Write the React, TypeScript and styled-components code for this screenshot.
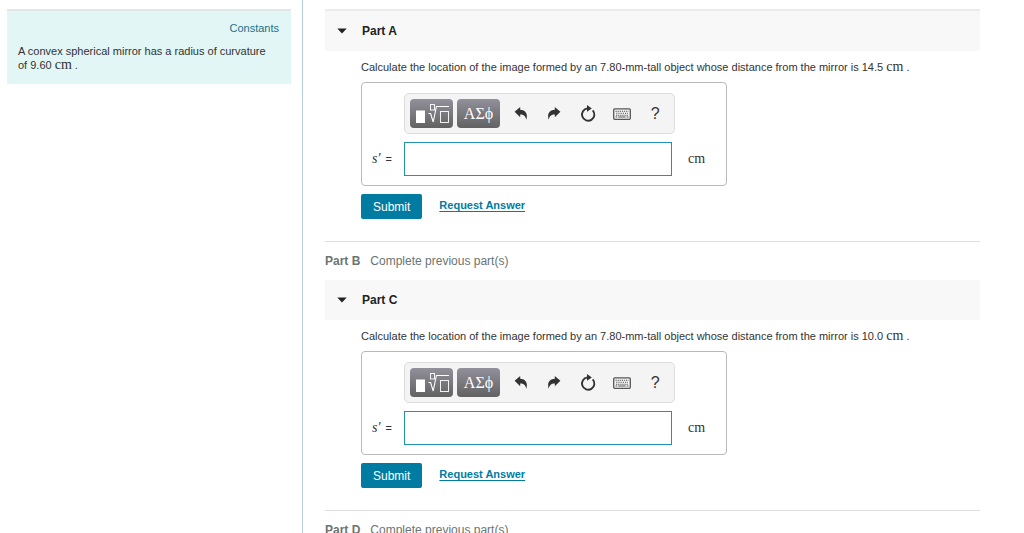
import React, { useId, useState } from "react";
import styled, { createGlobalStyle } from "styled-components";

const GlobalStyle = createGlobalStyle`
  *, *::before, *::after { box-sizing: border-box; }
  body {
    margin: 0;
    background: #fff;
    color: #333;
    font-family: "Liberation Sans", Arial, Helvetica, sans-serif;
    font-size: 11px;
    line-height: 14px;
  }
  button, input { font-family: inherit; }
`;

const Page = styled.div`
  display: flex;
  min-height: 100vh;
`;

const Sidebar = styled.aside`
  flex: 0 0 303px;
  padding: 9px 11px 0 7px;
  border-right: 1px solid #b8cfe0;
`;

const Intro = styled.section`
  padding: 10px 12px 12px 11px;
  border-top: 2px solid #e0e8e7;
  background: #e2f6f6;
`;

const ConstantsLink = styled.a`
  display: block;
  width: fit-content;
  margin: 0 0 9px auto;
  color: #1c7189;
  font-size: 11px;
  text-decoration: none;
`;

const Paragraph = styled.p`
  margin: 0;
  padding-right: 4px;
`;

const Unit = styled.span`
  font-family: "Liberation Serif", "Times New Roman", serif;
  font-size: 14px;
  line-height: 14px;
`;

const Main = styled.main`
  flex: 1;
  min-width: 0;
  padding: 9px 44px 0 22px;
`;

const Part = styled.section`
  border-bottom: 1px solid #dedede;
`;

const PartHeader = styled.h2<{ $first?: boolean }>`
  margin: 0;
  border-top: ${(p) => (p.$first ? "2px solid #ebebeb" : "0")};
  background: #f8f8f8;
`;

const PartToggle = styled.button`
  display: flex;
  align-items: center;
  gap: 15px;
  width: 100%;
  height: 40px;
  padding: 0 12px;
  border: 0;
  background: none;
  color: #222;
  font-size: 12px;
  font-weight: bold;
`;

const PartBody = styled.div`
  padding: 9px 0 22px 36px;
`;

const Answer = styled.div`
  width: fit-content;
  margin-top: 8px;
  padding: 10px 21px 9px 10px;
  border: 1px solid #b9b9b9;
  border-radius: 4px;
`;

const Toolbar = styled.div`
  display: flex;
  align-items: center;
  gap: 4px;
  width: 271px;
  height: 41px;
  margin: 0 0 8px 32px;
  padding: 0 2px 0 5px;
  border: 1px solid #dcdcdc;
  border-radius: 5px;
  background: #f4f4f4;
`;

const PaletteButton = styled.button`
  display: flex;
  align-items: center;
  justify-content: center;
  width: 43px;
  height: 29px;
  padding: 0;
  border: 0;
  border-radius: 4px;
  background: linear-gradient(#92909b, #626262);
  color: #fff;
  font-family: "Liberation Serif", "Times New Roman", serif;
  font-size: 16px;
`;

const IconGroup = styled.div`
  display: flex;
  flex: 1;
`;

const IconButton = styled.button`
  display: flex;
  flex: 1;
  align-items: center;
  justify-content: center;
  height: 28px;
  padding: 0;
  border: 0;
  background: none;
  color: #333;
  font-size: 16px;
`;

const Field = styled.div`
  display: flex;
  align-items: center;
`;

const FieldLabel = styled.label`
  display: flex;
  align-items: center;
  gap: 5px;
  width: 32px;
`;

const Variable = styled.i`
  font-family: "Liberation Serif", "Times New Roman", serif;
  font-size: 14px;
`;

const AnswerInput = styled.input`
  width: 268px;
  height: 34px;
  margin-right: 16px;
  padding: 0 8px;
  border: 1px solid #2291b3;
  border-radius: 0;
  background: #fff;
  font-size: 12px;
  outline: 0;
`;

const Actions = styled.div`
  display: flex;
  align-items: flex-start;
  gap: 17px;
  margin-top: 8px;
`;

const SubmitButton = styled.button`
  height: 25px;
  padding: 0 12px;
  border: 0;
  border-radius: 2px;
  background: #007ca3;
  color: #fff;
  font-size: 12px;
`;

const RequestLink = styled.a`
  padding-top: 4px;
  color: #007ca3;
  font-weight: bold;
  text-decoration: underline;
  text-underline-offset: 2px;
`;

const LockedPart = styled.p`
  display: flex;
  gap: 10px;
  margin: 0;
  padding: 12px 0;
  color: #6b7471;
  font-size: 12px;
  line-height: 14px;
`;

function TemplatesIcon() {
  return (
    <svg width="35" height="22" viewBox="0 0 35 22" fill="none" stroke="#fff" aria-hidden="true">
      <rect x="2" y="7.5" width="9" height="12.5" fill="#fff" stroke="none" />
      <rect x="16.5" y="1.5" width="4" height="5.5" strokeWidth="0.9" />
      <path d="M14.5 10.5H16.6L19.2 19 22.4 3.5H35" strokeWidth="1.1" />
      <rect x="26.5" y="8.5" width="8" height="11" strokeWidth="0.9" />
    </svg>
  );
}

function ArrowIcon({ forward }: { forward?: boolean }) {
  return (
    <svg width="14" height="14" viewBox="0 0 14 14" fill="currentColor" aria-hidden="true">
      <path
        transform={forward ? "matrix(-1 0 0 1 14 0)" : undefined}
        d="M.6 4.8 6.2 0V2.7C11.2 2.9 14.2 6.4 12.3 12.8 11.6 9.2 9.8 7.7 6.2 7.6V10.3Z"
      />
    </svg>
  );
}

function ResetIcon() {
  return (
    <svg width="16" height="18" viewBox="0 0 16 18" fill="none" aria-hidden="true">
      <path d="M12.7 5.3A6.2 6.2 0 1 1 7.5 3.4" stroke="currentColor" strokeWidth="1.9" />
      <path d="M7 0 11.8 3.4 7 6.8Z" fill="currentColor" />
    </svg>
  );
}

function KeyboardIcon() {
  return (
    <svg width="18" height="12" viewBox="0 0 18 12" fill="none" stroke="#555" aria-hidden="true">
      <rect x="0.7" y="0.9" width="16.6" height="10.4" rx="1" strokeWidth="1.3" />
      <path d="M2.5 3.3H15.5M3 7.2H15.5" strokeWidth="1.1" strokeDasharray="1.3 0.8" />
      <path d="M3.2 5.2H15" strokeWidth="1.1" strokeDasharray="1.2 1" />
      <path d="M2.5 9H4.2M5.2 9H12.6M13.6 9H15.5" />
    </svg>
  );
}

function Caret() {
  return (
    <svg width="10" height="6" viewBox="0 0 10 6" fill="#222" aria-hidden="true">
      <path d="M.3.4H9.7L5 5.6Z" />
    </svg>
  );
}

function OpenPart({ name, distance, first }: { name: string; distance: string; first?: boolean }) {
  const id = useId();
  const [open, setOpen] = useState(true);
  return (
    <Part>
      <PartHeader $first={first}>
        <PartToggle type="button" aria-expanded={open} onClick={() => setOpen(!open)}>
          <Caret />
          {name}
        </PartToggle>
      </PartHeader>
      {open && (
        <PartBody>
          <Paragraph>
            Calculate the location of the image formed by an 7.80-mm-tall object whose distance
            from the mirror is {distance} <Unit>cm</Unit> .
          </Paragraph>
          <Answer>
            <Toolbar role="toolbar" aria-label="Equation tools">
              <PaletteButton type="button" aria-label="Templates">
                <TemplatesIcon />
              </PaletteButton>
              <PaletteButton type="button">ΑΣϕ</PaletteButton>
              <IconGroup>
                <IconButton type="button" aria-label="Undo">
                  <ArrowIcon />
                </IconButton>
                <IconButton type="button" aria-label="Redo">
                  <ArrowIcon forward />
                </IconButton>
                <IconButton type="button" aria-label="Reset">
                  <ResetIcon />
                </IconButton>
                <IconButton type="button" aria-label="Keyboard shortcuts">
                  <KeyboardIcon />
                </IconButton>
                <IconButton type="button">?</IconButton>
              </IconGroup>
            </Toolbar>
            <Field>
              <FieldLabel htmlFor={id}>
                <Variable>s′</Variable> =
              </FieldLabel>
              <AnswerInput id={id} type="text" />
              <Unit>cm</Unit>
            </Field>
          </Answer>
          <Actions>
            <SubmitButton type="button">Submit</SubmitButton>
            <RequestLink href="#request">Request Answer</RequestLink>
          </Actions>
        </PartBody>
      )}
    </Part>
  );
}

function Locked({ name }: { name: string }) {
  return (
    <LockedPart>
      <b>{name}</b>
      <span>Complete previous part(s)</span>
    </LockedPart>
  );
}

export default function App() {
  return (
    <>
      <GlobalStyle />
      <Page>
        <Sidebar>
          <Intro>
            <ConstantsLink href="#constants">Constants</ConstantsLink>
            <Paragraph>
              A convex spherical mirror has a radius of curvature of 9.60 <Unit>cm</Unit> .
            </Paragraph>
          </Intro>
        </Sidebar>
        <Main>
          <OpenPart name="Part A" distance="14.5" first />
          <Locked name="Part B" />
          <OpenPart name="Part C" distance="10.0" />
          <Locked name="Part D" />
        </Main>
      </Page>
    </>
  );
}
